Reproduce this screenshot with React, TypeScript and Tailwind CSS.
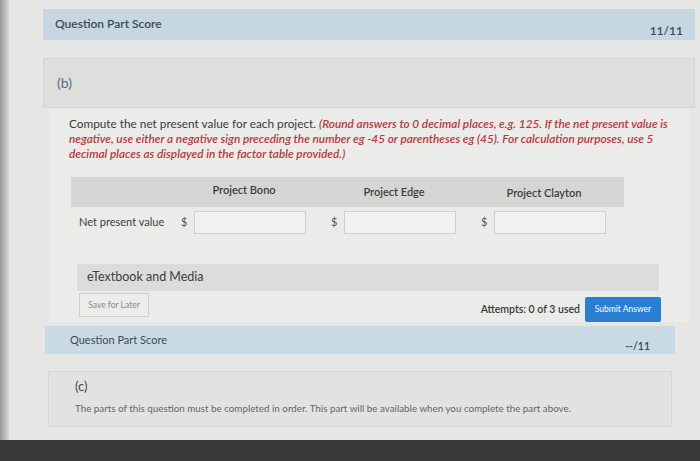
import React from 'react';

const font = { fontFamily: 'Lato, "Open Sans", Arial, sans-serif' };

function MoneyInput() {
  return (
    <div className="w-[150px] flex items-center">
      <span className="w-[13px] text-[11px] text-[#555]">$</span>
      <div className="w-[112px] h-[23px] bg-[#f1f1ef] border border-[#cfcfcd]"></div>
    </div>
  );
}

export default function App() {
  return (
    <div className="w-[700px] h-[461px] bg-[#e6e6e4] flex flex-col overflow-hidden" style={font}>
      <div className="flex-1 flex">
        {/* photo edge */}
        <div className="w-[9px] bg-gradient-to-r from-[#9a9a9a] to-[#d6d6d4]"></div>

        <div className="flex-1 flex flex-col pl-[34px] pr-[5px]">
          {/* top score bar */}
          <div className="mt-[9px] h-[31px] bg-[#c6d7e2] flex justify-between px-[12px]">
            <span className="pt-[6px] text-[12px] font-semibold text-[#3d4a55]">Question Part Score</span>
            <span className="pt-[13px] text-[12px] font-semibold text-[#3d4a55]">11/11</span>
          </div>

          {/* (b) */}
          <div className="mt-[18px] h-[50px] bg-[#dededc] border border-[#d4d4d2] pl-[13px] pt-[11px]">
            <span className="text-[14px] text-[#5c6d85]">(b)</span>
          </div>

          <div className="mx-[6px] bg-[#ebebe9] flex flex-col">
            <div className="mt-[8px] ml-[20px] flex flex-col text-[11.8px] leading-[15px] whitespace-nowrap">
              <div>
                <span className="text-[#3a3a3a]">Compute the net present value for each project. </span>
                <span className="italic font-semibold text-[#b9393c]">(Round answers to 0 decimal places, e.g. 125. If the net present value is</span>
              </div>
              <div className="italic font-semibold text-[#b9393c]">
                negative, use either a negative sign preceding the number eg -45 or parentheses eg (45). For calculation purposes, use 5
              </div>
              <div className="italic font-semibold text-[#b9393c]">
                decimal places as displayed in the factor table provided.)
              </div>
            </div>

            {/* table */}
            <div className="mt-[16px] ml-[22px] w-[553px] h-[30px] bg-[#d5d5d3] flex items-center text-[11px] font-semibold text-[#3d3d3d]">
              <div className="w-[110px]"></div>
              <div className="w-[150px]"><div className="w-[126px] text-center -mt-[3px]">Project Bono</div></div>
              <div className="w-[150px]"><div className="w-[126px] text-center">Project Edge</div></div>
              <div className="w-[140px]"><div className="w-[126px] text-center pt-[2px]">Project Clayton</div></div>
            </div>
            <div className="mt-[4px] ml-[30px] flex items-center">
              <span className="w-[102px] text-[11px] text-[#3d3d3d]">Net present value</span>
              <MoneyInput />
              <MoneyInput />
              <MoneyInput />
            </div>

            {/* eTextbook */}
            <div className="mt-[30px] ml-[28px] w-[582px] h-[27px] bg-[#dcdcda] flex items-center pl-[10px]">
              <span className="text-[12.5px] text-[#3d3d3d]">eTextbook and Media</span>
            </div>

            <div className="ml-[30px] mr-[28px] flex items-start justify-between">
              <div className="mt-[2px] w-[70px] h-[24px] border border-[#cfcfcd] bg-[#ececea] flex items-center justify-center text-[8.5px] text-[#8a8a8a]">
                Save for Later
              </div>
              <div className="flex items-center gap-[5px] mt-[6px]">
                <span className="text-[10.5px] font-semibold text-[#3a3a3a]">Attempts: 0 of 3 used</span>
                <div className="w-[76px] h-[25px] bg-[#2b7fd2] rounded-[2px] flex items-center justify-center text-[8.5px] text-white">
                  Submit Answer
                </div>
              </div>
            </div>
          </div>

          {/* second score bar */}
          <div className="mt-[4px] ml-[2px] mr-[20px] h-[28px] bg-[#c9dae4] flex justify-between px-[25px]">
            <span className="pt-[6px] text-[11px] text-[#3d4a55]">Question Part Score</span>
            <span className="pt-[13px] text-[10.5px] font-semibold text-[#3d4a55]">--/11</span>
          </div>

          {/* (c) */}
          <div className="mt-[17px] ml-[5px] mr-[23px] h-[56px] bg-[#e2e2e0] border border-[#d6d6d4] pl-[26px] pt-[5px] flex flex-col">
            <span className="text-[13px] text-[#4a4a4a] leading-[18px]">(c)</span>
            <span className="mt-[6px] text-[9.8px] text-[#666]">
              The parts of this question must be completed in order. This part will be available when you complete the part above.
            </span>
          </div>
        </div>
      </div>
      <div className="h-[21px] bg-[#3a3a3a]"></div>
    </div>
  );
}
